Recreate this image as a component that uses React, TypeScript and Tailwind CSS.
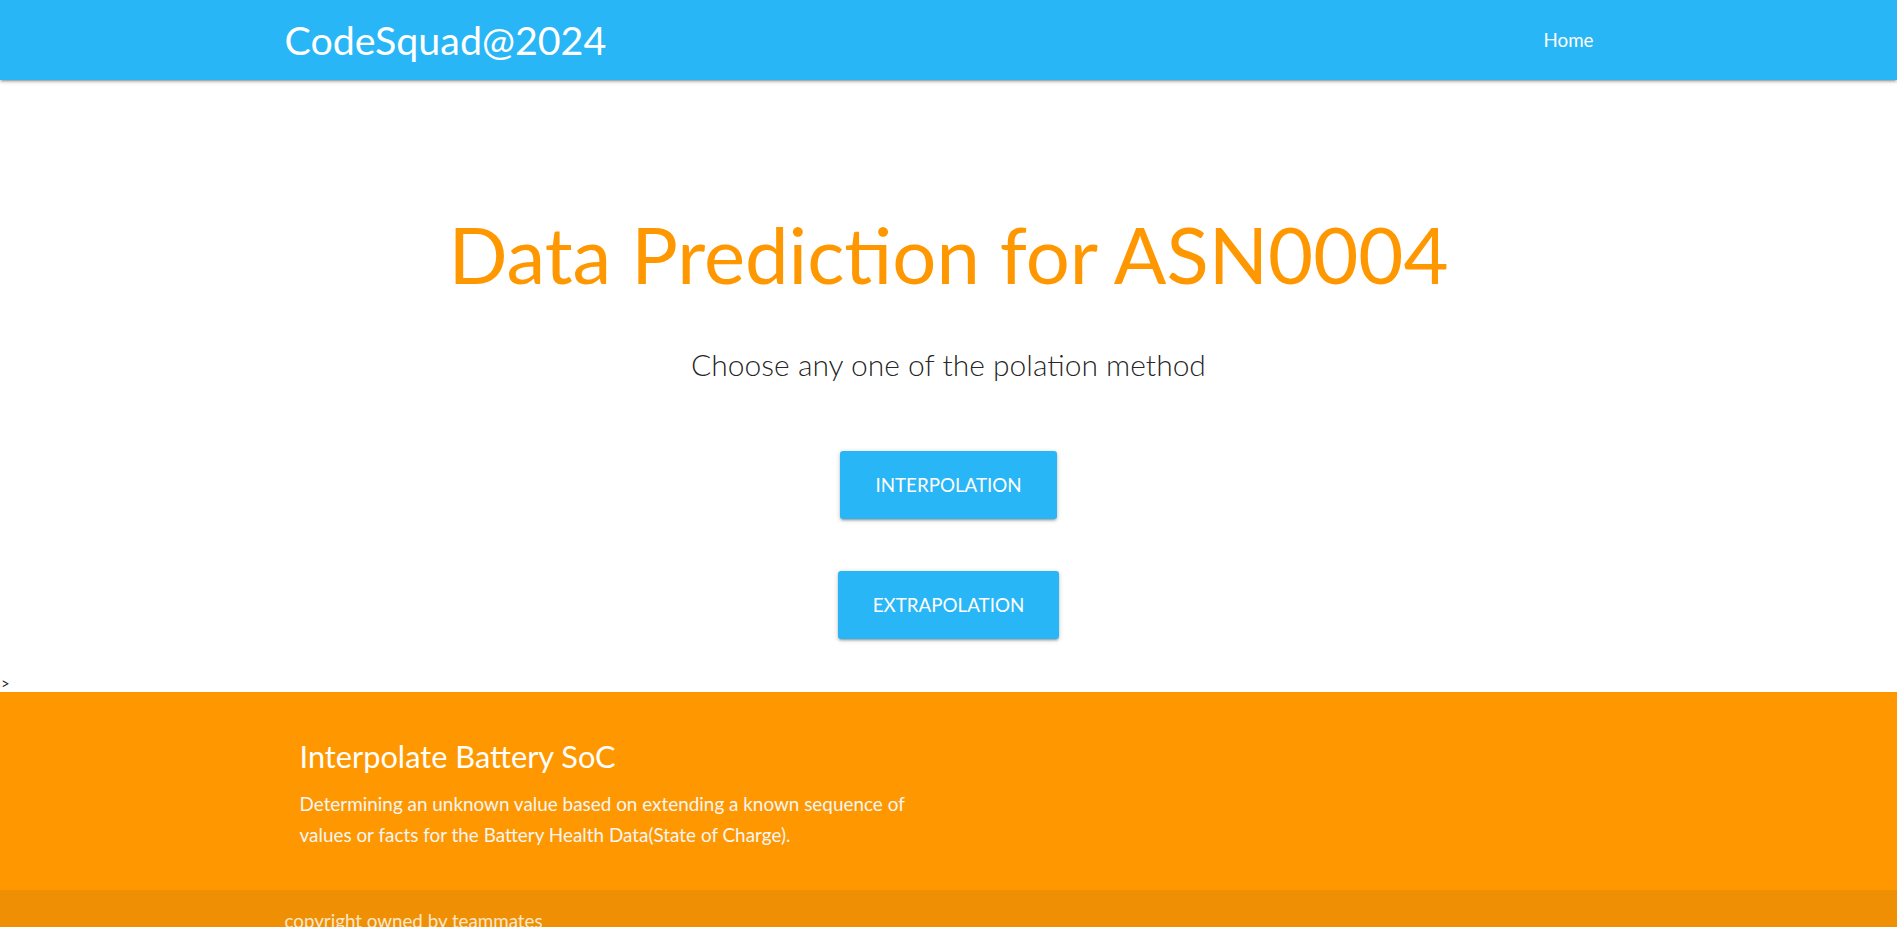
const font = "font-['Lato','Open_Sans',sans-serif]";

function RaisedButton({ label }: { label: string }) {
  return (
    <button
      type="button"
      className="h-[68px] px-[35px] rounded-[3px] bg-[#29b6f6] text-white text-[18.75px] leading-[68px] uppercase tracking-normal shadow-[0_2px_2px_0_rgba(0,0,0,0.14),0_3px_1px_-2px_rgba(0,0,0,0.12),0_1px_5px_0_rgba(0,0,0,0.2)]"
    >
      {label}
    </button>
  );
}

export default function App() {
  return (
    <div className={`min-h-screen bg-white text-[rgba(0,0,0,0.87)] ${font}`}>
      {/* Navbar */}
      <nav className="h-[80px] bg-[#29b6f6] shadow-[0_2px_2px_0_rgba(0,0,0,0.14),0_3px_1px_-2px_rgba(0,0,0,0.12),0_1px_5px_0_rgba(0,0,0,0.2)]">
        <div className="w-[1328px] mx-auto h-full flex items-center justify-between">
          <a className="text-white text-[39.4px] leading-none">CodeSquad@2024</a>
          <ul className="flex">
            <li>
              <a className="block px-[19px] text-white text-[18.75px] leading-[80px]">Home</a>
            </li>
          </ul>
        </div>
      </nav>

      {/* Hero */}
      <section className="w-[1328px] mx-auto pt-[132px]">
        <h1 className="text-center text-[#ff9800] text-[77.8px] leading-[1.1]">
          Data Prediction for ASN0004
        </h1>
        <h5 className="mt-[50px] text-center text-[30px] font-light leading-[1.1]">
          Choose any one of the polation method
        </h5>
        <div className="mt-[70px] flex flex-col items-center gap-[52px]">
          <RaisedButton label="Interpolation" />
          <RaisedButton label="Extrapolation" />
        </div>
      </section>
      <div className="mt-[35px] text-[15px] leading-[18px] pl-[1px]">&gt;</div>

      {/* Footer */}
      <footer className="bg-[#ff9800] pt-[25px]">
        <div className="w-[1328px] mx-auto">
          <div className="w-1/2 px-[15px] pt-[23px] pb-[40px]">
            <h5 className="text-white text-[30.75px] leading-[1.1]">Interpolate Battery SoC</h5>
            <p className="mt-[15px] text-[#f5f5f5] text-[18.9px] leading-[31px]">
              Determining an unknown value based on extending a known sequence of values or facts
              for the Battery Health Data(State of Charge).
            </p>
          </div>
        </div>
        <div className="bg-[rgba(51,51,51,0.08)] h-[62px]">
          <div className="w-[1328px] mx-auto text-[rgba(255,255,255,0.8)] text-[18.75px] leading-[62px]">
            copyright owned by teammates
          </div>
        </div>
      </footer>
    </div>
  );
}
